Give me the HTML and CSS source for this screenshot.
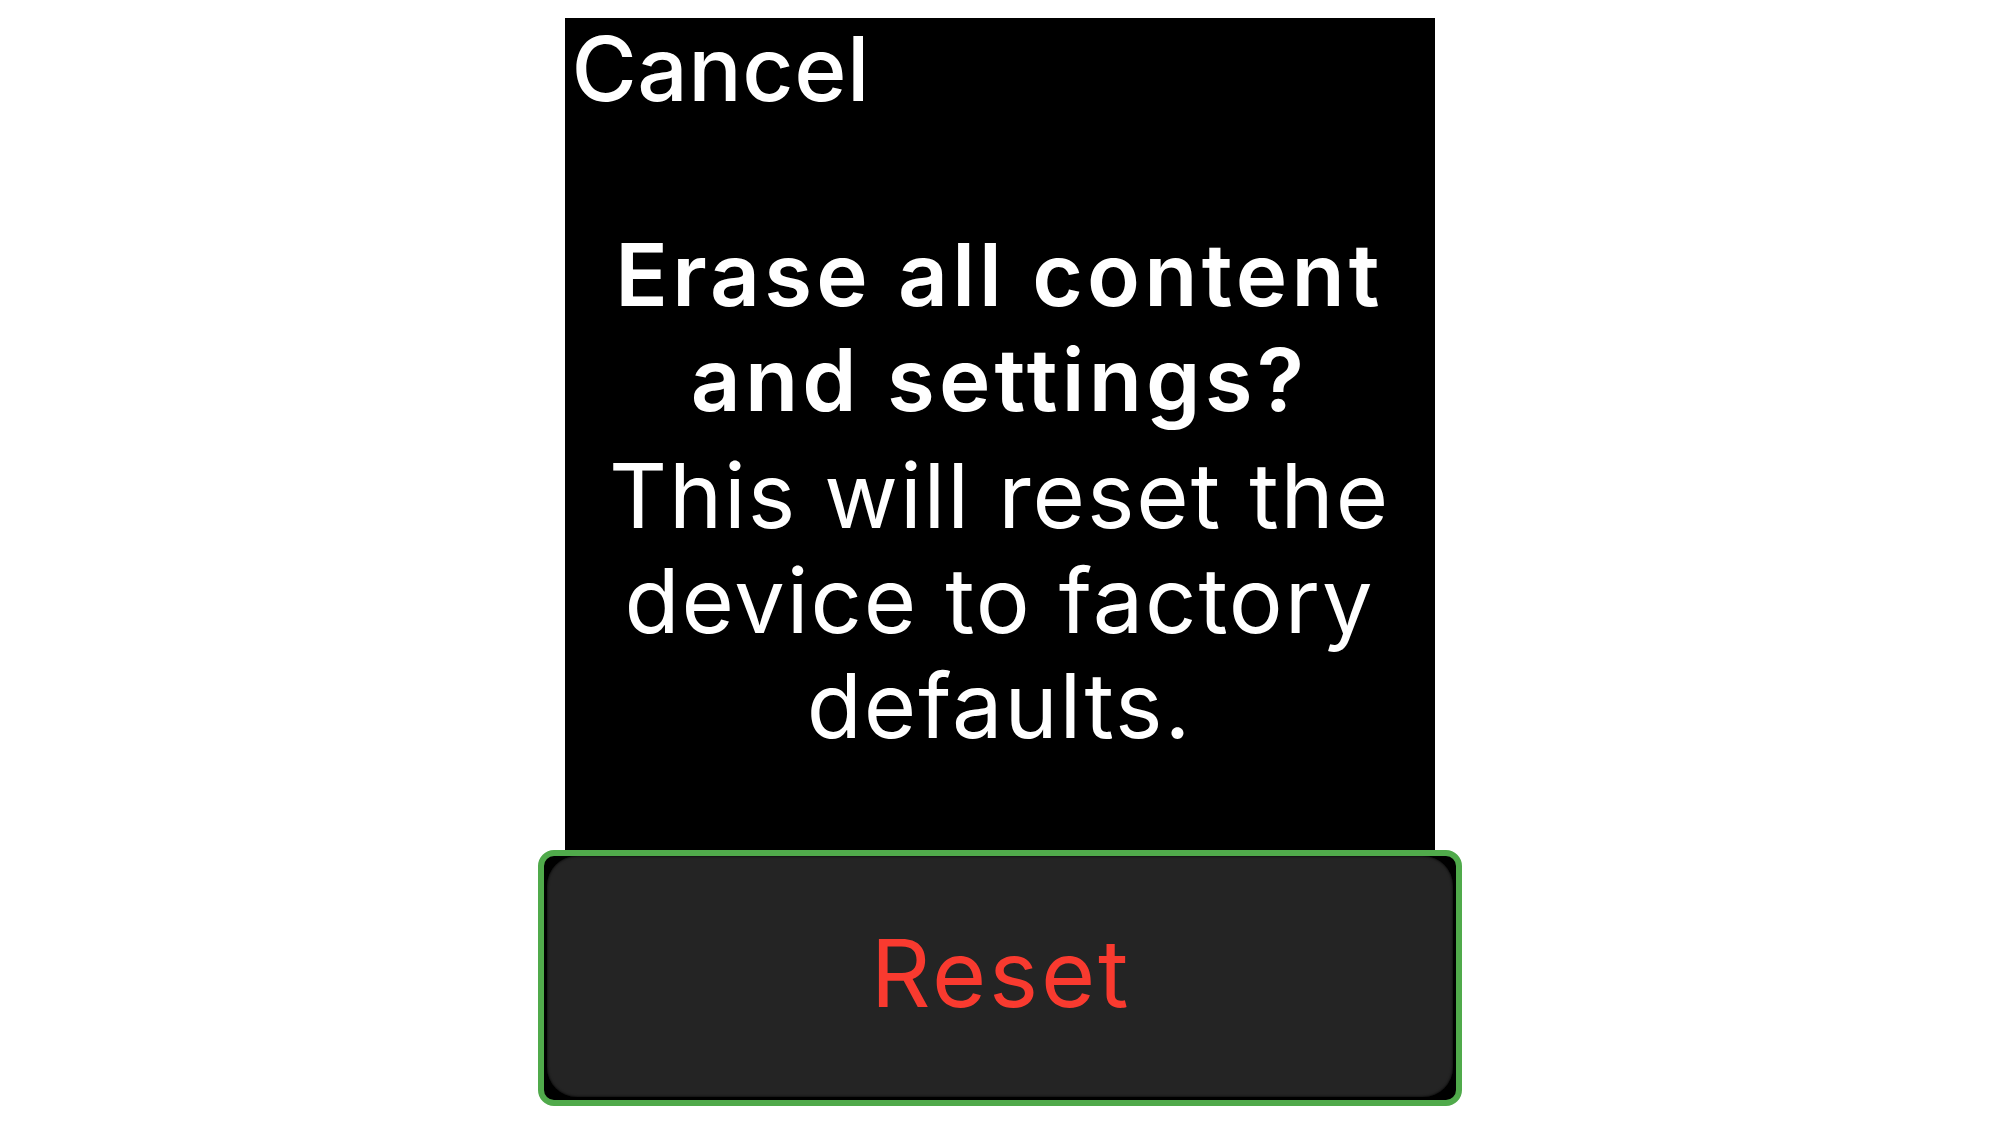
FILE: index.html
```html
<!DOCTYPE html>
<html lang="en">
<head>
    <meta charset="UTF-8">
    <meta name="viewport" content="width=device-width, initial-scale=1.0">
    <title>Erase all content</title>
    <link rel="stylesheet" href="styles.css">
</head>
<body>
    <div class="screen">
        <div class="cancel">Cancel</div>
        <div class="title">Erase all content<br>and settings?</div>
        <div class="message">This will reset the<br>device to factory<br>defaults.</div>
        <div class="reset-btn">
            <div class="reset-face">Reset</div>
        </div>
    </div>
</body>
</html>
```

FILE: styles.css
```css
:root {
    --screen-bg: #000000;
    --button-bg: #242424;
    --text-color: #ffffff;
    --danger-color: #f93a2f;
    --focus-color: #50aa4b;
}

body {
    font-family: Inter, "Noto Sans", sans-serif;
    background-color: #ffffff;
    margin: 0;
    padding-top: 18px;
}

.screen {
    width: 870px;
    margin: 0 auto;
    background-color: var(--screen-bg);
    color: var(--text-color);
}

.cancel {
    font-size: 89px;
    font-weight: 500;
    letter-spacing: 0.5px;
    line-height: 89px;
    padding: 6px 0 0 7px;
}

.title {
    margin-top: 109px;
    font-size: 87px;
    font-weight: 600;
    letter-spacing: 4.2px;
    line-height: 105px;
    text-align: center;
}

.message {
    margin-top: 11px;
    font-size: 90px;
    letter-spacing: 1.9px;
    line-height: 105px;
    text-align: center;
}

.reset-btn {
    height: 256px;
    box-sizing: border-box;
    margin: 92px -27px 0;
    padding: 0 3px 3px;
    border: 6px solid var(--focus-color);
    border-radius: 16px;
    background-color: var(--screen-bg);
}

.reset-face {
    height: 100%;
    display: flex;
    align-items: center;
    justify-content: center;
    padding: 0 0 7px 3px;
    box-sizing: border-box;
    border-radius: 30px;
    background-color: var(--button-bg);
    box-shadow: inset 0 0 3px #000;
    color: var(--danger-color);
    font-size: 93px;
    letter-spacing: 2.8px;
    line-height: 1;
}
```
